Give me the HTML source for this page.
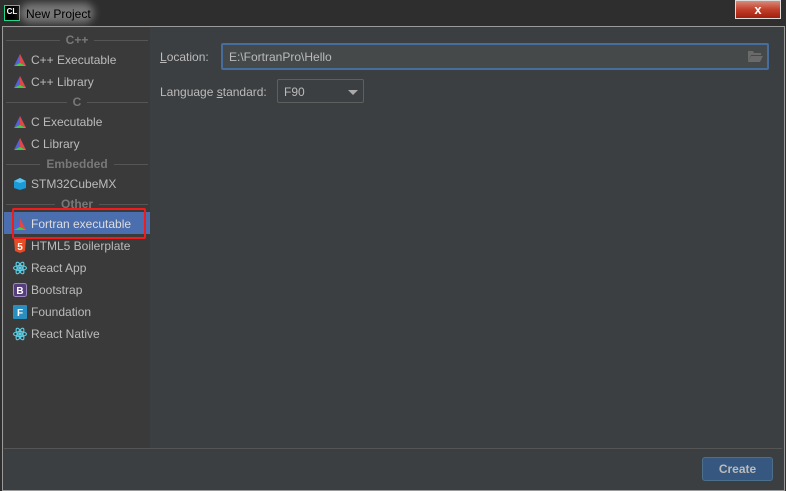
<!DOCTYPE html><html><head><style>
body{margin:0;width:786px;height:491px;background:#2e2e2e;font-family:"Liberation Sans",sans-serif;font-size:12px;overflow:hidden;position:relative}
.abs{position:absolute}
.frame{left:2px;top:26px;width:781px;height:463px;border:1px solid #9a9a9a;background:#3c3f41}
.left{left:4px;top:28px;width:146px;height:420px;background:#3a3a3a}
.sep{left:4px;top:448px;width:778px;height:1px;background:#555}
.item{position:absolute;left:4px;width:146px;height:22px;color:#bbb;font-size:12px;line-height:24px}
.item span{position:absolute;left:27px}
.ic{position:absolute;left:9px;top:5px;width:14px;height:14px}
.hdr{position:absolute;left:4px;width:146px;height:20px;color:#787878;font-weight:bold;font-size:12px;line-height:20px;text-align:center}
.hdr:before{content:"";position:absolute;left:2px;right:2px;top:10px;height:1px;background:#555}
.hdr b{position:relative;background:#3a3a3a;padding:0 6px}
</style></head><body>
<div class="abs" style="left:4px;top:5px;width:16px;height:16px;background:#000;border:1px solid #21d789;box-sizing:border-box;color:#fff;font-size:8px;font-weight:bold;line-height:12px;text-align:center">CL</div>
<div class="abs" style="left:20px;top:3px;width:74px;height:20px;background:#8a8a8a;border-radius:10px;filter:blur(4px);opacity:.8"></div>
<div class="abs" style="left:26px;top:7px;font-size:12px;color:#000">New Project</div>
<div class="abs" style="left:735px;top:0;width:46px;height:19px;background:linear-gradient(#d88a7a,#c2402a 50%,#a0200e);border:1px solid #ddd;box-sizing:border-box;color:#fff;font-weight:bold;font-size:13px;text-align:center;line-height:17px">x</div>
<div class="abs frame"></div>
<div class="abs left"></div>
<div class="abs sep"></div>

<div class="hdr" style="top:30px"><b>C++</b></div>
<div class="item" style="top:48px"><svg class="ic" viewBox="0 0 14 14"><polygon points="7,1 1,13 13,13" fill="#5561d8"/><polygon points="7,1 13,13 7,10" fill="#e04848"/><polygon points="1,13 13,13 7,10" fill="#3ccf3c"/></svg><span>C++ Executable</span></div>
<div class="item" style="top:70px"><svg class="ic" viewBox="0 0 14 14"><polygon points="7,1 1,13 13,13" fill="#5561d8"/><polygon points="7,1 13,13 7,10" fill="#e04848"/><polygon points="1,13 13,13 7,10" fill="#3ccf3c"/></svg><span>C++ Library</span></div>
<div class="hdr" style="top:92px"><b>C</b></div>
<div class="item" style="top:110px"><svg class="ic" viewBox="0 0 14 14"><polygon points="7,1 1,13 13,13" fill="#5561d8"/><polygon points="7,1 13,13 7,10" fill="#e04848"/><polygon points="1,13 13,13 7,10" fill="#3ccf3c"/></svg><span>C Executable</span></div>
<div class="item" style="top:132px"><svg class="ic" viewBox="0 0 14 14"><polygon points="7,1 1,13 13,13" fill="#5561d8"/><polygon points="7,1 13,13 7,10" fill="#e04848"/><polygon points="1,13 13,13 7,10" fill="#3ccf3c"/></svg><span>C Library</span></div>
<div class="hdr" style="top:154px"><b>Embedded</b></div>
<div class="item" style="top:172px"><svg class="ic" viewBox="0 0 14 14"><polygon points="7,1 13,4 13,11 7,13 1,11 1,4" fill="#1a9ad6"/><polygon points="7,1 13,4 7,6 1,4" fill="#5cc6f2"/></svg><span>STM32CubeMX</span></div>
<div class="hdr" style="top:194px"><b>Other</b></div>
<div class="item" style="top:212px;background:#4b6eaf;color:#ddd"><svg class="ic" viewBox="0 0 14 14"><polygon points="7,1 1,13 13,13" fill="#5561d8"/><polygon points="7,1 13,13 7,10" fill="#e04848"/><polygon points="1,13 13,13 7,10" fill="#3ccf3c"/></svg><span>Fortran executable</span></div>
<div class="abs" style="left:12px;top:208px;width:134px;height:31px;border:2px solid #f01c1c;border-radius:2px;box-sizing:border-box"></div>
<div class="item" style="top:234px"><svg class="ic" viewBox="0 0 14 14"><polygon points="1,0 13,0 12,12 7,14 2,12" fill="#e44d26"/><text x="7" y="11" font-size="10" font-weight="bold" fill="#fff" text-anchor="middle" font-family="Liberation Sans">5</text></svg><span>HTML5 Boilerplate</span></div>
<div class="item" style="top:256px"><svg class="ic" viewBox="0 0 14 14" fill="none" stroke="#5ccfe6" stroke-width="1.1"><ellipse cx="7" cy="7" rx="6.5" ry="2.5"/><ellipse cx="7" cy="7" rx="6.5" ry="2.5" transform="rotate(60 7 7)"/><ellipse cx="7" cy="7" rx="6.5" ry="2.5" transform="rotate(-60 7 7)"/><circle cx="7" cy="7" r="1.2" fill="#5ccfe6"/></svg><span>React App</span></div>
<div class="item" style="top:278px"><svg class="ic" viewBox="0 0 14 14"><rect x="0.5" y="0.5" width="13" height="13" rx="2" fill="#563d7c" stroke="#9b8ac0"/><text x="7" y="11" font-size="10" font-weight="bold" fill="#fff" text-anchor="middle" font-family="Liberation Sans">B</text></svg><span>Bootstrap</span></div>
<div class="item" style="top:300px"><svg class="ic" viewBox="0 0 14 14"><rect width="14" height="14" rx="1" fill="#2a8fc0"/><text x="7" y="11" font-size="10" font-weight="bold" fill="#fff" text-anchor="middle" font-family="Liberation Sans">F</text></svg><span>Foundation</span></div>
<div class="item" style="top:322px"><svg class="ic" viewBox="0 0 14 14" fill="none" stroke="#5ccfe6" stroke-width="1.1"><ellipse cx="7" cy="7" rx="6.5" ry="2.5"/><ellipse cx="7" cy="7" rx="6.5" ry="2.5" transform="rotate(60 7 7)"/><ellipse cx="7" cy="7" rx="6.5" ry="2.5" transform="rotate(-60 7 7)"/><circle cx="7" cy="7" r="1.2" fill="#5ccfe6"/></svg><span>React Native</span></div>

<div class="abs" style="left:160px;top:50px;color:#bbb"><u>L</u>ocation:</div>
<div class="abs" style="left:221px;top:43px;width:548px;height:27px;border:2px solid #466d9c;box-sizing:border-box;background:#45494a;border-radius:2px"></div>
<div class="abs" style="left:229px;top:50px;color:#bbb">E:\FortranPro\Hello</div>
<svg class="abs" style="left:747px;top:50px" width="16" height="13" viewBox="0 0 16 13"><path d="M1 1h5l1 2h7v2H4L1 12z" fill="#6a6a6a"/><path d="M4 6h12l-3 6H1z" fill="#6a6a6a"/></svg>
<div class="abs" style="left:160px;top:85px;color:#bbb">Language <u>s</u>tandard:</div>
<div class="abs" style="left:277px;top:79px;width:87px;height:24px;border:1px solid #5e6060;box-sizing:border-box;border-radius:2px;background:#3c3f41"></div>
<div class="abs" style="left:284px;top:85px;color:#bbb">F90</div>
<div class="abs" style="left:348px;top:90px;width:0;height:0;border-left:5px solid transparent;border-right:5px solid transparent;border-top:5px solid #aaa"></div>

<div class="abs" style="left:702px;top:457px;width:71px;height:24px;background:#365880;border:1px solid #4c708c;box-sizing:border-box;border-radius:3px;color:#bbb;text-align:center;line-height:22px;font-weight:bold">Create</div>
</body></html>
